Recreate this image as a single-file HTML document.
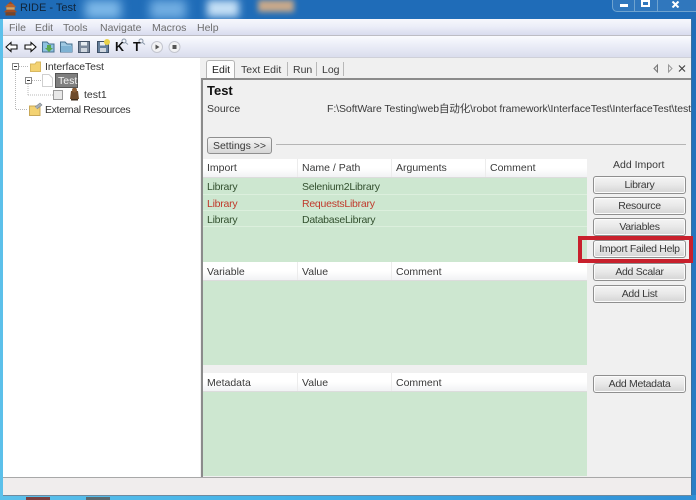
<!DOCTYPE html>
<html><head><meta charset="utf-8"><style>
html,body{margin:0;padding:0;background:#2a7cc4}
#r{position:relative;width:696px;height:500px;overflow:hidden;font-family:"Liberation Sans","Noto Sans CJK SC",sans-serif;font-size:10.5px;color:#3a3a3a;background:linear-gradient(#1f6cb8,#2a7fc6);filter:blur(.3px)}
#r div{position:absolute;box-sizing:border-box}
.t{white-space:nowrap;line-height:13px}
.hd{background:linear-gradient(#fff 0,#fff 50%,#f1f2f4 100%);border-bottom:1px solid #dcdcdc;height:19px}
.gr{background:#cde7d0}
.l{letter-spacing:-.25px}
.b{left:593px;width:93px;height:18px;border:1px solid #8f8f8f;border-radius:3px;background:linear-gradient(#f4f4f4,#e8e8e8 50%,#d4d4d4);text-align:center;line-height:17px;white-space:nowrap;letter-spacing:-.3px;box-shadow:inset 0 0 0 1px #fbfbfb}
.sep{width:1px;background:#ececec}
.row{left:203px;width:384px;height:1px;background:#dcefdd}
</style></head><body><div id="r">
<!-- desktop blobs -->
<div style="left:85px;top:0;width:36px;height:19px;background:#7db8e8;filter:blur(5px)"></div>
<div style="left:150px;top:0;width:36px;height:19px;background:#72aee2;filter:blur(5px)"></div>
<div style="left:207px;top:0;width:32px;height:17px;background:#c4dff5;filter:blur(4px)"></div>
<div style="left:258px;top:0;width:36px;height:12px;background:#c9a98a;filter:blur(3px)"></div>
<!-- title -->
<div style="left:3px;top:1px;width:15px;height:15px"><svg width="15" height="15" viewBox="0 0 18 17"><path d="M9 0L13 4H5Z" fill="#9c4a22"/><path d="M2 7L6 3H12L16 7Z" fill="#b5612c"/><rect x="4" y="7" width="10" height="3" fill="#d9a35c"/><path d="M1 13L4 10H14L17 13Z" fill="#a04f25"/><rect x="3" y="13" width="12" height="4" fill="#7a4526"/></svg></div>
<div class="t" style="left:20px;top:2px;font-size:11px;color:#10243a">RIDE - Test</div>
<div style="left:612px;top:-2px;width:90px;height:14px;border:1px solid #6fa3cf;border-radius:0 0 5px 5px;background:rgba(255,255,255,.08)"></div>
<div style="left:634px;top:-1px;width:1px;height:12px;background:#6fa3cf"></div>
<div style="left:657px;top:-1px;width:1px;height:12px;background:#6fa3cf"></div>
<div style="left:620px;top:4px;width:8px;height:3px;background:#fff"></div>
<div style="left:641px;top:0;width:9px;height:7px;border:2px solid #fff"></div>
<svg style="position:absolute;left:671px;top:1px" width="9" height="7" viewBox="0 0 9 7"><path d="M1.500 .5L7.500 6.500M7.500 .5L1.500 6.500" stroke="#fff" stroke-width="2"/></svg>
<!-- window -->
<div style="left:2px;top:19px;width:690px;height:477px;background:#f0f0f0;border:1px solid #3a6f9e;border-radius:2px 2px 0 0"></div>
<div style="left:0;top:19px;width:3px;height:481px;background:#5cc0ea"></div>
<div style="left:0;top:495px;width:696px;height:5px;background:linear-gradient(90deg,#5cc0ea,#43b2e8 40%,#2f8fd6)"></div>
<div style="left:26px;top:497px;width:24px;height:3px;background:#7a4040"></div>
<div style="left:86px;top:497px;width:24px;height:3px;background:#5a6a70"></div>
<!-- menu -->
<div style="left:3px;top:19px;width:688px;height:17px;background:linear-gradient(#f6f7fc,#eceef8 45%,#d9dcee);border-bottom:1px solid #bdbdc4"></div>
<div class="t" style="left:9px;top:22px;color:#6d6d6d">File</div>
<div class="t" style="left:35px;top:22px;color:#6d6d6d">Edit</div>
<div class="t" style="left:63px;top:22px;color:#6d6d6d">Tools</div>
<div class="t" style="left:100px;top:22px;color:#6d6d6d">Navigate</div>
<div class="t" style="left:152px;top:22px;color:#6d6d6d">Macros</div>
<div class="t" style="left:197px;top:22px;color:#6d6d6d">Help</div>
<!-- toolbar -->
<div style="left:3px;top:36px;width:688px;height:22px;background:linear-gradient(#fafbfe,#eef0f9 35%,#dadded);border-bottom:1px solid #cfd0d8"></div>
<svg style="position:absolute;left:0;top:37px" width="190" height="22" viewBox="0 0 190 22">
<path d="M6 10L11 5.500V8H17V12H11V14.500Z" fill="#fff" stroke="#111" stroke-width="1.100"/>
<path d="M36 10L31 5.500V8H25V12H31V14.500Z" fill="#fff" stroke="#111" stroke-width="1.100"/>
<path d="M42.500 5H47L49 7H54V15H42.500Z" fill="#8ec2e0" stroke="#47708f"/><path d="M47 8H51V11H53L49 15L45 11H47Z" fill="#5aa84e"/>
<path d="M60.500 5H65L67 7H72V15H60.500Z" fill="#9fc8e2" stroke="#47708f"/><path d="M61 9H72V15H61Z" fill="#7fb2d3"/>
<rect x="78.500" y="4.500" width="11" height="11" fill="#7d8a9c" stroke="#47566a"/><rect x="81" y="5" width="6" height="3.500" fill="#e8edf2"/><rect x="81" y="11" width="6" height="4" fill="#cfd6de"/>
<rect x="97.500" y="4.500" width="11" height="11" fill="#66809c" stroke="#3e5066"/><rect x="100" y="5" width="5" height="3.500" fill="#e8edf2"/><rect x="100" y="11" width="6" height="4" fill="#cfd6de"/><circle cx="107" cy="5" r="3" fill="#e8d24a"/>
<circle cx="157" cy="10" r="5.500" fill="#f2f2f4" stroke="#c4c6cf"/><path d="M155.500 7.500L159.500 10L155.500 12.500Z" fill="#555"/>
<circle cx="174.500" cy="10" r="5.500" fill="#f2f2f4" stroke="#c4c6cf"/><rect x="172.500" y="8" width="4" height="4" fill="#555"/>
<circle cx="124" cy="4" r="2" fill="none" stroke="#8a97a8"/><path d="M125.500 5.500L128 7.500" stroke="#8a97a8"/>
<circle cx="141" cy="4" r="2" fill="none" stroke="#8a97a8"/><path d="M142.500 5.500L145 7.500" stroke="#8a97a8"/>
</svg>
<div class="t" style="left:115px;top:41px;font-size:12.500px;font-weight:bold;color:#111">K</div>
<div class="t" style="left:133px;top:41px;font-size:12.500px;font-weight:bold;color:#111">T</div>
<!-- tree -->
<div style="left:3px;top:58px;width:197px;height:420px;background:#fff"></div>
<svg style="position:absolute;left:0;top:58px" width="130" height="60" viewBox="0 0 130 60">
<g stroke="#b8b8b8" stroke-dasharray="1 1" fill="none"><path d="M15.500 12V51.500H28"/><path d="M19 8.500H29"/><path d="M28 26V37"/><path d="M32 22.500H42"/><path d="M28 37H53"/></g>
<rect x="12.500" y="5.500" width="6" height="6" fill="#fff" stroke="#888"/><path d="M14 8.500H17" stroke="#333"/>
<rect x="25.500" y="19.500" width="6" height="6" fill="#fff" stroke="#888"/><path d="M27 22.500H30" stroke="#333"/>
<path d="M30.500 6H35L36.500 4H40.500V13.500H30.500Z" fill="#f3d272" stroke="#d8b860"/>
<path d="M42.500 16.500H49L52.500 20V28.500H42.500Z" fill="#fff" stroke="#cfcfcf"/>
<rect x="53.500" y="32.500" width="9" height="9" fill="#e8e8e8" stroke="#9a9a9a"/>
<path d="M71 33H78L79 41H70Z" fill="#6e4a2a"/><circle cx="74.500" cy="32" r="2.500" fill="#8a5c34"/><rect x="71" y="41" width="7" height="1.500" fill="#3e2a18"/>
<path d="M29.500 48H40V57.500H29.500Z" fill="#f3d272" stroke="#c8a858"/><path d="M35 49L40 45L42 47L37 51" fill="#a8b0b8" stroke="#7b838b" stroke-width=".6"/>
</svg>
<div class="t" style="left:45px;top:61px;color:#333;letter-spacing:-.1px">InterfaceTest</div>
<div class="t" style="left:55px;top:73px;width:23px;height:15px;background:#7f7f7f;border:1px solid #555;color:#f4f4f4;padding:0 0 0 2px;line-height:14px;font-size:10.500px">Test</div>
<div class="t" style="left:84px;top:89px;color:#333">test1</div>
<div class="t" style="left:45px;top:104px;color:#333;letter-spacing:-.35px">External Resources</div>
<!-- tabs -->
<div style="left:201px;top:58px;width:490px;height:20px;background:#f0f0f0"></div>
<div style="left:206px;top:60px;width:29px;height:18px;background:#fdfdfd;border:1px solid #b4b4b4;border-bottom:none;border-radius:3px 3px 0 0"></div>
<div class="t" style="left:212px;top:64px;color:#222">Edit</div>
<div class="t" style="left:241px;top:64px">Text Edit</div>
<div class="t" style="left:293px;top:64px">Run</div>
<div class="t" style="left:322px;top:64px">Log</div>
<div style="left:287px;top:62px;width:1px;height:14px;background:#b8b8b8"></div>
<div style="left:316px;top:62px;width:1px;height:14px;background:#b8b8b8"></div>
<div style="left:343px;top:62px;width:1px;height:14px;background:#b8b8b8"></div>
<svg style="position:absolute;left:650px;top:62px" width="40" height="12" viewBox="0 0 40 12"><path d="M7.500 3L4 6.500L7.500 10Z" fill="#ddd" stroke="#777"/><path d="M18.500 3L22 6.500L18.500 10Z" fill="#eee" stroke="#999"/><path d="M29 3.500L35 9.500M35 3.500L29 9.500" stroke="#444" stroke-width="1.200"/></svg>
<div style="left:201px;top:78px;width:490px;height:2px;background:#8b8b8b"></div>
<div style="left:201px;top:78px;width:2px;height:399px;background:#8b8b8b"></div>
<!-- head -->
<div class="t" style="left:207px;top:84px;font-size:13px;font-weight:bold;color:#111">Test</div>
<div class="t" style="left:207px;top:103px">Source</div>
<div class="t" style="left:327px;top:103px;width:364px;letter-spacing:-.08px">F:\SoftWare Testing\web自动化\robot framework\InterfaceTest\InterfaceTest\test</div>
<div style="left:207px;top:137px;width:65px;height:17px;border:1px solid #8f8f8f;border-radius:3px;background:linear-gradient(#f4f4f4,#e6e6e6 50%,#d6d6d6);text-align:center;line-height:16px;white-space:nowrap">Settings &gt;&gt;</div>
<div style="left:276px;top:144px;width:410px;height:1px;background:#b5b5b5"></div>
<!-- import grid -->
<div class="hd" style="left:203px;top:159px;width:384px"></div>
<div class="sep" style="left:297px;top:159px;height:18px"></div><div class="sep" style="left:391px;top:159px;height:18px"></div><div class="sep" style="left:485px;top:159px;height:18px"></div>
<div class="t" style="left:207px;top:162px">Import</div><div class="t" style="left:302px;top:162px">Name / Path</div><div class="t" style="left:396px;top:162px">Arguments</div><div class="t" style="left:490px;top:162px">Comment</div>
<div class="gr" style="left:203px;top:178px;width:384px;height:84px"></div>
<div class="row" style="top:194px"></div><div class="row" style="top:210px"></div><div class="row" style="top:226px"></div>
<div class="t l" style="left:207px;top:181px;color:#33502f">Library</div><div class="t l" style="left:302px;top:181px;color:#33502f">Selenium2Library</div>
<div class="t l" style="left:207px;top:198px;color:#c0392b">Library</div><div class="t l" style="left:302px;top:198px;color:#c0392b">RequestsLibrary</div>
<div class="t l" style="left:207px;top:214px;color:#33502f">Library</div><div class="t l" style="left:302px;top:214px;color:#33502f">DatabaseLibrary</div>
<!-- variable grid -->
<div class="hd" style="left:203px;top:262px;width:384px"></div>
<div class="sep" style="left:297px;top:262px;height:18px"></div><div class="sep" style="left:391px;top:262px;height:18px"></div>
<div class="t" style="left:207px;top:266px">Variable</div><div class="t" style="left:302px;top:266px">Value</div><div class="t" style="left:396px;top:266px">Comment</div>
<div class="gr" style="left:203px;top:281px;width:384px;height:84px"></div>
<!-- metadata grid -->
<div class="hd" style="left:203px;top:373px;width:384px"></div>
<div class="sep" style="left:297px;top:373px;height:18px"></div><div class="sep" style="left:391px;top:373px;height:18px"></div>
<div class="t" style="left:207px;top:377px">Metadata</div><div class="t" style="left:302px;top:377px">Value</div><div class="t" style="left:396px;top:377px">Comment</div>
<div class="gr" style="left:203px;top:392px;width:384px;height:84px"></div>
<!-- buttons -->
<div class="t" style="left:613px;top:159px">Add Import</div>
<div class="b" style="top:176px">Library</div>
<div class="b" style="top:197px">Resource</div>
<div class="b" style="top:218px">Variables</div>
<div class="b" style="top:240px">Import Failed Help</div>
<div class="b" style="top:263px">Add Scalar</div>
<div class="b" style="top:285px">Add List</div>
<div class="b" style="top:375px">Add Metadata</div>
<!-- red highlight -->
<div style="left:578px;top:236px;width:115px;height:27px;border:4px solid #c8202c"></div>
<!-- status -->
<div style="left:3px;top:477px;width:688px;height:1px;background:#a8a8a8"></div>
<div style="left:3px;top:478px;width:688px;height:17px;background:#f0eded"></div>
<div style="left:3px;top:495px;width:689px;height:1px;background:#6f8a9e"></div>
</div></body></html>
